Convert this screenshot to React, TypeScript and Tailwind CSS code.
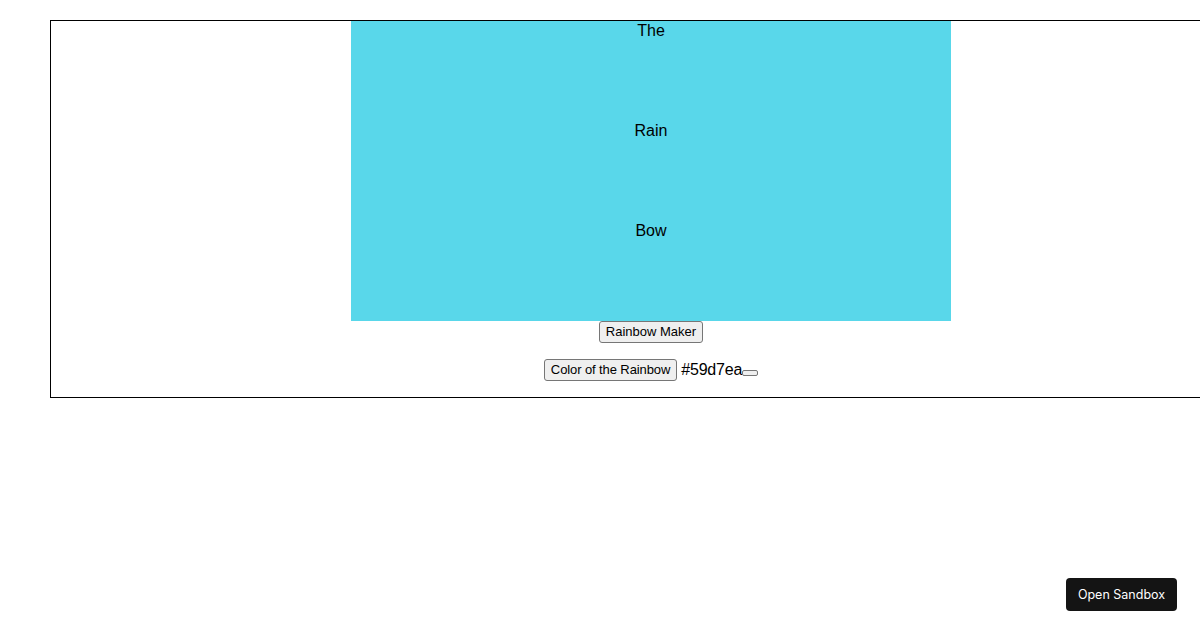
import React from 'react';

const segments = ['The', 'Rain', 'Bow'];

const btn =
  'inline-block align-baseline bg-[#efefef] border border-[#767676] rounded-[3px] px-[6px] h-[22px] text-[13px] leading-[20px] text-black';

export default function App() {
  return (
    <div className="relative w-full h-[630px] overflow-hidden bg-white text-black font-['Liberation_Sans',Arial,sans-serif] text-base">
      <div className="ml-[50px] mt-[20px] w-[1202px] border border-black text-center">
        <div className="mx-auto w-[600px] bg-[#59d7ea]">
          {segments.map((s) => (
            <div key={s} className="h-[100px] pt-[1px] leading-[18px]">
              {s}
            </div>
          ))}
        </div>
        <div className="flex justify-center">
          <button className={btn}>Rainbow Maker</button>
        </div>
        <p className="my-4 h-[22px] leading-[22px] flex justify-center items-center">
          <button className={btn + ' tracking-[-0.1px]'}>Color of the Rainbow</button>
          <span className="ml-[4px] tracking-[-0.2px]">#59d7ea</span>
          <button className="self-end mb-[5px] w-[16px] h-[6px] bg-[#efefef] border border-[#767676] rounded-[2px]"></button>
        </p>
      </div>

      <button className="absolute right-[23px] bottom-[19px] w-[111px] h-[33px] pt-[2px] rounded-[4px] bg-[#141414] text-white text-[12.5px] font-['Inter','Liberation_Sans',sans-serif]">
        Open Sandbox
      </button>
    </div>
  );
}
